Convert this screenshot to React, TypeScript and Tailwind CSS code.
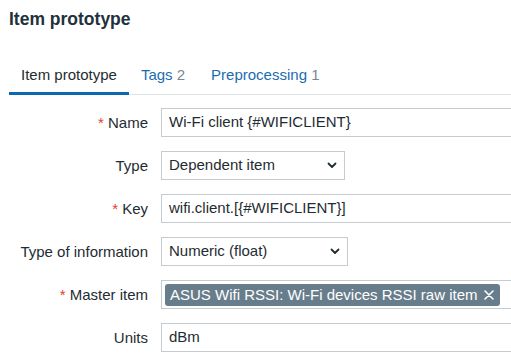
import React from "react";

const font = { fontFamily: '"Liberation Sans", Arial, sans-serif' };

const Chevron: React.FC = () => (
  <svg width="10" height="7" viewBox="0 0 10 7" className="shrink-0">
    <path d="M1.5 1.5 L5 5 L8.5 1.5" fill="none" stroke="#1f2c33" strokeWidth="1.8" strokeLinecap="round" strokeLinejoin="round" />
  </svg>
);

const Row: React.FC<{ label: string; required?: boolean; children: React.ReactNode }> = ({ label, required, children }) => (
  <div className="flex items-center h-[29px]">
    <div className="w-[148px] shrink-0 text-right text-[15px] leading-[18px] text-[#1f2c33]">
      {required && <span className="text-[#e33a35]">* </span>}
      {label}
    </div>
    <div className="ml-[13px] flex-1 min-w-0 h-full">{children}</div>
  </div>
);

const TextBox: React.FC<{ value: string }> = ({ value }) => (
  <div className="h-full w-[400px] border border-[#c5cbd0] bg-white flex items-center pl-[7px] text-[15px] text-[#1f2c33] whitespace-nowrap">
    {value}
  </div>
);

const Select: React.FC<{ value: string; width: string }> = ({ value, width }) => (
  <div className={`h-full ${width} border border-[#c5cbd0] bg-white flex items-center justify-between px-[7px] text-[15px] text-[#1f2c33] whitespace-nowrap`}>
    <span>{value}</span>
    <Chevron />
  </div>
);

export default function App() {
  return (
    <div style={font} className="w-[511px] h-[357px] bg-white overflow-hidden">
      <div className="pt-[9px] px-[9px]">
        <h1 className="text-[17.5px] leading-[20px] font-bold text-[#22313b]">Item prototype</h1>
      </div>

      {/* tabs */}
      <div className="mt-[37px] ml-[9px] flex border-b border-[#dfe4e7] text-[15px] leading-[18px]">
        <div className="px-[12px] pb-[8px] border-b-[3px] border-[#0b68b3] -mb-px text-[#1f2c33]">Item prototype</div>
        <div className="pl-[12px] pr-[14px] pb-[8px] text-[#1a6db2]">
          Tags <span className="text-[#768692]">2</span>
        </div>
        <div className="pl-[12px] pr-[12px] pb-[8px] text-[#1a6db2]">
          Preprocessing <span className="text-[#768692]">1</span>
        </div>
      </div>

      <div className="mt-[13px] flex flex-col gap-[14px]">
        <Row label="Name" required>
          <TextBox value="Wi-Fi client {#WIFICLIENT}" />
        </Row>
        <Row label="Type">
          <Select value="Dependent item" width="w-[184px]" />
        </Row>
        <Row label="Key" required>
          <TextBox value="wifi.client.[{#WIFICLIENT}]" />
        </Row>
        <Row label="Type of information">
          <Select value="Numeric (float)" width="w-[187px]" />
        </Row>
        <Row label="Master item" required>
          <div className="h-full w-[400px] border border-[#c5cbd0] bg-white flex items-center pl-[3px]">
            <div className="h-[22px] rounded-[3px] bg-[#687d8b] text-white text-[15px] leading-[22px] pl-[5px] pr-[6px] flex items-center gap-[6px] whitespace-nowrap">
              <span>ASUS Wifi RSSI: Wi-Fi devices RSSI raw item</span>
              <svg width="10" height="10" viewBox="0 0 10 10">
                <path d="M1 1 L9 9 M9 1 L1 9" stroke="white" strokeWidth="1.6" strokeLinecap="round" />
              </svg>
            </div>
          </div>
        </Row>
        <Row label="Units">
          <TextBox value="dBm" />
        </Row>
      </div>
    </div>
  );
}
